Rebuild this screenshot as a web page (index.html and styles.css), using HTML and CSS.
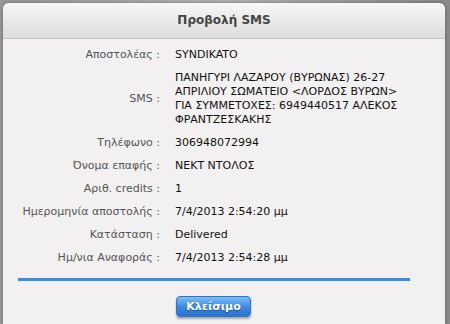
FILE: index.html
```html
<!DOCTYPE html>
<html lang="el">
<head>
    <meta charset="UTF-8">
    <title>Προβολή SMS</title>
    <link rel="stylesheet" href="styles.css">
</head>
<body>
    <div class="backdrop">
        <div class="dialog">
            <div class="dialog-title">Προβολή SMS</div>
            <div class="dialog-body">
                <table class="details">
                    <tr>
                        <td class="lbl">Αποστολέας :</td>
                        <td class="val">SYNDIKATO</td>
                    </tr>
                    <tr>
                        <td class="lbl">SMS :</td>
                        <td class="val">ΠΑΝΗΓΥΡΙ ΛΑΖΑΡΟΥ (ΒΥΡΩΝΑΣ) 26-27<br>ΑΠΡΙΛΙΟΥ ΣΩΜΑΤΕΙΟ &lt;ΛΟΡΔΟΣ ΒΥΡΩΝ&gt;<br>ΓΙΑ ΣΥΜΜΕΤΟΧΕΣ: 6949440517 ΑΛΕΚΟΣ<br>ΦΡΑΝΤΖΕΣΚΑΚΗΣ</td>
                    </tr>
                    <tr>
                        <td class="lbl">Τηλέφωνο :</td>
                        <td class="val">306948072994</td>
                    </tr>
                    <tr>
                        <td class="lbl">Όνομα επαφής :</td>
                        <td class="val">ΝΕΚΤ ΝΤΟΛΟΣ</td>
                    </tr>
                    <tr>
                        <td class="lbl">Αριθ. credits :</td>
                        <td class="val">1</td>
                    </tr>
                    <tr>
                        <td class="lbl">Ημερομηνία αποστολής :</td>
                        <td class="val">7/4/2013 2:54:20 μμ</td>
                    </tr>
                    <tr>
                        <td class="lbl">Κατάσταση :</td>
                        <td class="val">Delivered</td>
                    </tr>
                    <tr>
                        <td class="lbl">Ημ/νια Αναφοράς :</td>
                        <td class="val">7/4/2013 2:54:28 μμ</td>
                    </tr>
                </table>
                <div class="divider"></div>
                <div class="actions">
                    <button class="btn-close">Κλείσιμο</button>
                </div>
            </div>
        </div>
    </div>
</body>
</html>
```

FILE: styles.css
```css
html, body {
    margin: 0;
    padding: 0;
}
body {
    font-family: "DejaVu Sans", Verdana, sans-serif;
    font-size: 11px;
    background: #8f8f8f;
    overflow: hidden;
}
.backdrop {
    box-sizing: border-box;
    height: 324px;
    padding: 3px 5px 0 3px;
    background: linear-gradient(to right, #9a9a9a, #b5b5b5 50%, #8a8a8a);
}
.dialog {
    height: 321px;
    border-radius: 6px 6px 0 0;
    background-color: #f2f0f0;
    box-shadow: 0 0 4px rgba(0, 0, 0, 0.35);
    overflow: hidden;
}
.dialog-title {
    height: 35px;
    line-height: 35px;
    text-align: center;
    font-size: 12px;
    font-weight: bold;
    color: #444;
    background: linear-gradient(to bottom, #f7f7f7, #dcdcdc);
    border-bottom: 1px solid #c4c4c4;
}
.dialog-body {
    padding: 5px 0 0 0;
}
.details {
    border-collapse: collapse;
}
.details td {
    padding: 4px 5px 5px 5px;
    line-height: 14px;
}
.details .lbl {
    width: 152px;
    text-align: right;
    color: #555;
    white-space: nowrap;
    vertical-align: middle;
}
.details .val {
    color: #111;
    padding-left: 10px;
    vertical-align: top;
}
.divider {
    width: 392px;
    height: 3px;
    margin: 8px 0 0 15px;
    background-color: #3b8ee8;
}
.actions {
    padding: 15px 0 0 173px;
}
.btn-close {
    width: 75px;
    height: 21px;
    padding: 0;
    border: 1px solid #2f73c4;
    border-radius: 4px;
    background: linear-gradient(to bottom, #7dbcf5, #3b87df 55%, #2c74cf);
    box-shadow: 0 2px 2px rgba(0, 0, 0, 0.3);
    color: #fff;
    font-family: "DejaVu Sans", Verdana, sans-serif;
    font-size: 11px;
    font-weight: bold;
    text-shadow: 0 1px 1px #1c4f8f;
    cursor: pointer;
}
```
